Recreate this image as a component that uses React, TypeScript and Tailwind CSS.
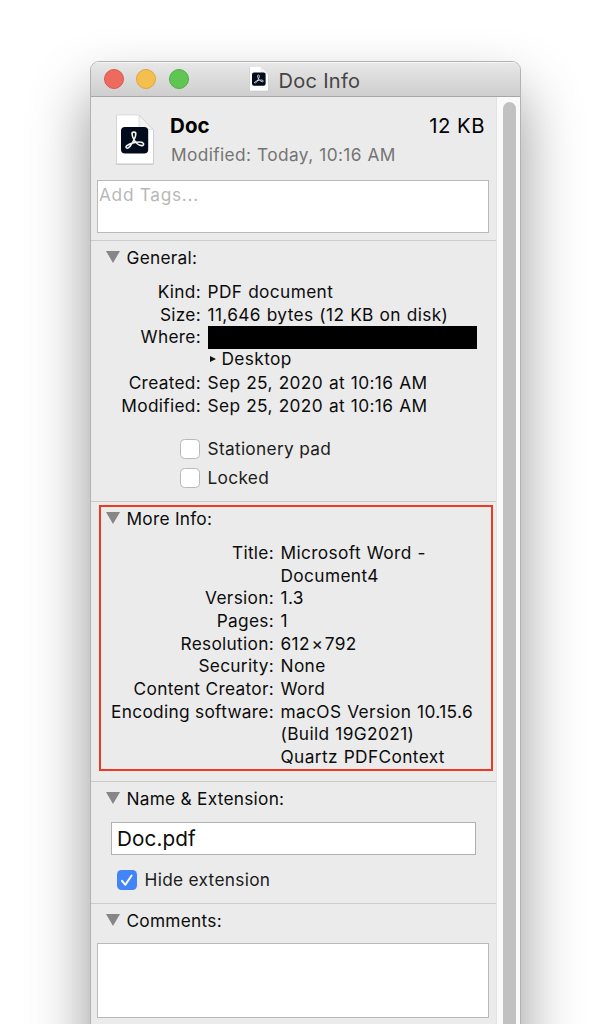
import type { ReactNode } from 'react';

type Row = { label: string; lines: ReactNode[] };

const moreInfo: Row[] = [
  { label: 'Title:', lines: ['Microsoft Word -', 'Document4'] },
  { label: 'Version:', lines: ['1.3'] },
  { label: 'Pages:', lines: ['1'] },
  { label: 'Resolution:', lines: [<>612<span className="mx-[1.5px]">×</span>792</>] },
  { label: 'Security:', lines: ['None'] },
  { label: 'Content Creator:', lines: ['Word'] },
  { label: 'Encoding software:', lines: ['macOS Version 10.15.6', '(Build 19G2021)', 'Quartz PDFContext'] },
];

const PdfIcon = ({ className }: { className: string }) => (
  <svg viewBox="0 0 40 52" className={className}>
    <path d="M1.7 1.5H24L38 16V50H1.7Z" fill="#bdbdbd" stroke="#c2c2c2" strokeWidth="1.4" strokeLinejoin="round" />
    <path d="M1.7 1.2H24L38 15.5V49.5H1.7Z" fill="#fff" />
    <path d="M24 1.2V12Q24 15.5 28 15.5H38Z" fill="#f3f3f3" stroke="#d4d4d4" strokeWidth="0.7" />
    <rect x="6" y="13" width="27.2" height="26.5" rx="4" fill="#020b1c" />
    <path
      d="M17 19.5C17 17.6 20.8 17.6 20.8 19.5C20.8 22 19.600 25.500 16.500 30C14.500 33.500 12.500 35 11.300 33.800C10 32.400 13 30.200 18 29C22 28 26 27.700 27.800 28.800C29.600 30 28.300 32 26.300 31.600C23.500 31 20 27.800 18.600 25C17.600 23 17 21 17 19.500Z"
      fill="none"
      stroke="#f4f2ee"
      strokeWidth="1.6"
      strokeLinejoin="round"
    />
  </svg>
);

const SectionTitle = ({ children }: { children: ReactNode }) => (
  <div className="flex h-[34px] items-center pl-[14.5px]">
    <svg viewBox="0 0 14 12" className="mr-[7px] mb-[2px] h-3 w-3.5">
      <path d="M0 0H14L7 12Z" fill="#868686" />
    </svg>
    <h2 className="text-[17.3px] tracking-[0.25px]">{children}</h2>
  </div>
);

const Field = ({ label, labelWidth, children }: { label: string; labelWidth: string; children: ReactNode }) => (
  <div className="flex leading-[22.67px]">
    <div className={`${labelWidth} shrink-0 text-right tracking-[0.3px]`}>{label}</div>
    <div className="ml-[6.5px] tracking-[0.37px] [word-spacing:0.6px] whitespace-nowrap">{children}</div>
  </div>
);

const Checkbox = ({ label, checked = false }: { label: string; checked?: boolean }) => (
  <label className="flex items-center gap-[7.5px]">
    {checked ? (
      <span className="flex h-5 w-5 items-center justify-center rounded-[4.5px] bg-[#4285f6]">
        <svg viewBox="0 0 20 20" className="h-5 w-5">
          <path d="M5 10.800L8.400 14.800L14.600 5.500" fill="none" stroke="#fff" strokeWidth="2" strokeLinecap="round" strokeLinejoin="round" />
        </svg>
      </span>
    ) : (
      <span className="h-5 w-5 rounded-[4.5px] border border-[#b9b9b9] bg-white" />
    )}
    <span className="tracking-[0.3px] text-[#1c1c1c]">{label}</span>
  </label>
);

const App = () => {
  return (
    <div className="h-screen overflow-hidden bg-white pt-[61px] pl-[90px] font-['Inter',sans-serif] text-[17.3px] tracking-[0.2px] text-[#0c0c0c]">
      <div className="flex h-[1100px] w-[431px] flex-col overflow-hidden rounded-t-[9px] border border-[#b2b2b2] bg-[#ebebeb] shadow-[0_32px_60px_rgba(0,0,0,0.42)]">
        <header className="flex h-[35px] shrink-0 items-center border-b border-[#a6a6a6] bg-linear-to-b from-[#e8e8e8] to-[#cecece] pl-[12.5px] shadow-[inset_0_1px_0_#f6f6f6]">
          <div className="flex gap-[12.5px]">
            <span className="h-5 w-5 rounded-full border border-[#d9574f] bg-[#ed6a5e]" />
            <span className="h-5 w-5 rounded-full border border-[#dca53c] bg-[#f5bf4f]" />
            <span className="h-5 w-5 rounded-full border border-[#4fae40] bg-[#61c554]" />
          </div>
          <PdfIcon className="ml-[60px] h-[26px] w-5" />
          <h1 className="ml-[10px] pt-[3px] text-[20px] tracking-[0.3px] text-[#444]">Doc Info</h1>
        </header>

        <div className="flex grow">
          <main className="w-[405px] shrink-0">
            <section className="h-[144px] border-b border-[#cbcbcb] pl-[6px]">
              <div className="flex h-[83px] pt-[17px] pl-[18px]">
                <PdfIcon className="h-[52px] w-10" />
                <div className="ml-[15px] w-[225px] whitespace-nowrap">
                  <div className="h-6 text-[20.5px] leading-6 font-bold tracking-[0.1px] text-black">Doc</div>
                  <div className="mt-[5px] pl-px text-[17.3px] leading-6 tracking-[0.38px] [word-spacing:0.5px] text-[#747474]">Modified: Today, 10:16 AM</div>
                </div>
                <div className="w-[90px] text-right text-[20.3px] leading-6 tracking-[0.5px] text-black">12 KB</div>
              </div>
              <div className="h-[53px] w-[392px] border-[1.5px] border-[#b9b9b9] bg-white pl-px leading-[27px] tracking-[0.7px] text-[#b8b8b8]">Add Tags...</div>
            </section>

            <section className="h-[261px] border-b border-[#cbcbcb]">
              <SectionTitle>General:</SectionTitle>
              <div className="mt-[6px]">
                <Field label="Kind:" labelWidth="w-[110px]">PDF document</Field>
                <Field label="Size:" labelWidth="w-[110px]">11,646 bytes (12 KB on disk)</Field>
                <Field label="Where:" labelWidth="w-[110px]">
                  <div className="h-[23px] w-[269px] bg-black" />
                  <div className="flex h-[20px] items-center leading-[20px]">
                    <svg viewBox="0 0 6 6" className="mr-[6px] ml-0.5 h-1.5 w-1.5">
                      <path d="M0 0L6 3L0 6Z" fill="#111" />
                    </svg>
                    Desktop
                  </div>
                </Field>
                <div className="mt-[3px]">
                  <Field label="Created:" labelWidth="w-[110px]">Sep 25, 2020 at 10:16 AM</Field>
                  <Field label="Modified:" labelWidth="w-[110px]">Sep 25, 2020 at 10:16 AM</Field>
                </div>
              </div>
              <div className="mt-[21px] flex flex-col gap-[9px] pl-[89px] leading-5">
                <Checkbox label="Stationery pad" />
                <Checkbox label="Locked" />
              </div>
            </section>

            <section className="h-[280px] border-b border-[#cbcbcb] pt-[3px] pl-[8px]">
              <div className="h-[266px] w-[394px] border-2 border-[#ee3a20]">
                <div className="-mt-[5px] -ml-[10px]">
                  <SectionTitle>More Info:</SectionTitle>
                  <div className="mt-[6px]">
                    {moreInfo.map((row) => (
                      <Field key={row.label} label={row.label} labelWidth="w-[183px]">
                        {row.lines.map((line, i) => (
                          <div key={i}>{line}</div>
                        ))}
                      </Field>
                    ))}
                  </div>
                </div>
              </div>
            </section>

            <section className="h-[122px] border-b border-[#cbcbcb]">
              <SectionTitle>Name &amp; Extension:</SectionTitle>
              <div className="mt-[6px] ml-[20px] flex h-[33px] w-[365px] items-center border border-[#b0b0b0] bg-white pl-[5px] text-[20.7px] tracking-[0.1px]">
                Doc.pdf
              </div>
              <div className="mt-[15px] pl-[26px] leading-5">
                <Checkbox label="Hide extension" checked />
              </div>
            </section>

            <section>
              <SectionTitle>Comments:</SectionTitle>
              <div className="mt-[5px] ml-[6px] h-[75px] w-[392px] border-[1.5px] border-[#b9b9b9] bg-white" />
            </section>
          </main>

          <div className="w-6 border-l border-[#e2e2e2] bg-[#fafafa] pt-[5px] pl-[6px]">
            <div className="h-full w-[13px] rounded-full bg-[#c1c1c1]" />
          </div>
        </div>
      </div>
    </div>
  );
};

export default App;
